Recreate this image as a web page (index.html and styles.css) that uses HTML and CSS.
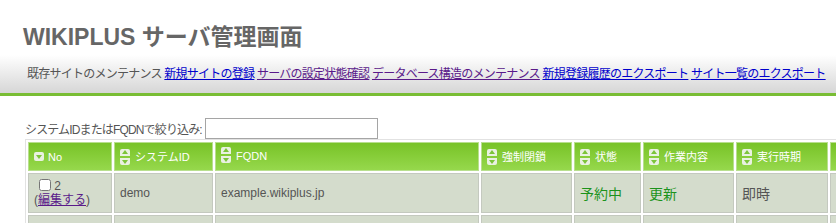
FILE: index.html
```html
<!DOCTYPE html>
<html lang="ja">
<head>
    <meta charset="UTF-8">
    <title>WIKIPLUS サーバ管理画面</title>
    <link rel="stylesheet" href="styles.css">
</head>
<body>

<div class="header">
    <h1>WIKIPLUS サーバ管理画面</h1>
</div>

<!-- Menu -->
<div class="nav">
    <span class="current">既存サイトのメンテナンス</span>
    <a href="#">新規サイトの登録</a>
    <a href="#" class="visited">サーバの設定状態確認</a>
    <a href="#" class="visited">データベース構造のメンテナンス</a>
    <a href="#">新規登録履歴のエクスポート</a>
    <a href="#">サイト一覧のエクスポート</a>
</div>

<div class="content">
    <div class="filter">
        <label for="filter-input">システムIDまたはFQDNで絞り込み:</label>
        <input type="text" id="filter-input">
    </div>

    <div class="table-wrap">
        <table class="sites">
            <thead>
                <tr>
                    <th class="col-no"><span class="sort sort-down"></span>No</th>
                    <th class="col-id"><span class="sort"></span>システムID</th>
                    <th class="col-fqdn"><span class="sort"></span>FQDN</th>
                    <th class="col-close"><span class="sort"></span>強制閉鎖</th>
                    <th class="col-state"><span class="sort"></span>状態</th>
                    <th class="col-work"><span class="sort"></span>作業内容</th>
                    <th class="col-when"><span class="sort"></span>実行時期</th>
                    <th class="col-more"></th>
                </tr>
            </thead>
            <tbody>
                <tr>
                    <td class="no">
                        <label class="check"><input type="checkbox"> 2</label>
                        (<a href="#">編集する</a>)
                    </td>
                    <td>demo</td>
                    <td>example.wikiplus.jp</td>
                    <td></td>
                    <td class="big green">予約中</td>
                    <td class="big green">更新</td>
                    <td class="big">即時</td>
                    <td></td>
                </tr>
                <tr class="next">
                    <td></td><td></td><td></td><td></td><td></td><td></td><td></td><td></td>
                </tr>
            </tbody>
        </table>
    </div>
</div>

</body>
</html>
```

FILE: styles.css
```css
body {
    margin: 0;
    padding: 0;
    background-color: #fff;
    font-family: "Liberation Sans", Arial, "Noto Sans CJK JP", sans-serif;
    color: #555;
    overflow: hidden;
}

.header {
    padding: 24px 0 0 23px;
    height: 31px;
}

h1 {
    margin: 0;
    font-size: 23px;
    line-height: 26px;
    font-weight: bold;
    color: #666;
}

.nav {
    height: 38px;
    line-height: 38px;
    padding-left: 27px;
    font-size: 12px;
    letter-spacing: -0.75px;
    white-space: nowrap;
    background: linear-gradient(#fff, #d6d6d6);
    border-bottom: 3px solid #79bd34;
}

.nav .current {
    color: #555;
}

.nav a {
    color: #0000cc;
}

.nav a.visited {
    color: #5a1a8a;
}

.content {
    padding-left: 25px;
}

.filter {
    margin-top: 21px;
    height: 22px;
    font-size: 12px;
    letter-spacing: -0.85px;
    display: flex;
    align-items: center;
}

.filter input {
    margin: 0 0 0 3px;
    width: 167px;
    height: 17px;
    border: 1px solid #a5a5a5;
    padding: 1px 2px;
}

.table-wrap {
    overflow: hidden;
}

.sites {
    border: 1px solid #e2e2e2;
    border-right: none;
    border-spacing: 2px;
    table-layout: fixed;
    width: 887px;
    font-size: 12px;
}

.sites th,
.sites td {
    box-sizing: border-box;
    text-align: left;
    padding: 0 5px;
    white-space: nowrap;
}

.sites th {
    height: 29px;
    color: #fff;
    font-weight: normal;
    font-size: 11px;
    background: linear-gradient(#78c327, #96d84c);
    border: 1px solid #b8df8e;
}

.sites td {
    height: 40px;
    background-color: #d4dccc;
    border: 1px solid #c4c9bf;
}

.sites .next td {
    height: 20px;
}

.col-no { width: 84px; }
.col-id { width: 99px; }
.col-fqdn { width: 264px; }
.col-close { width: 91px; }
.col-state { width: 67px; }
.col-work { width: 91px; }
.col-when { width: 92px; }
.col-more { width: 80px; }

.sort {
    display: inline-block;
    vertical-align: middle;
    width: 10px;
    height: 16px;
    margin: -3px 5px 0 0;
    background:
        linear-gradient(#e9f1e1, #e9f1e1) top / 10px 7px no-repeat,
        linear-gradient(#e9f1e1, #e9f1e1) bottom / 10px 7px no-repeat;
    border-radius: 2px;
    position: relative;
}

.sort::before,
.sort::after {
    content: "";
    position: absolute;
    left: 2px;
    border-left: 3px solid transparent;
    border-right: 3px solid transparent;
}

.sort::before {
    top: 1px;
    border-bottom: 4px solid #7cc43a;
}

.sort::after {
    bottom: 1px;
    border-top: 4px solid #7cc43a;
}

.sort.sort-down {
    height: 9px;
    background: #e9f1e1;
    margin-right: 4px;
}

.sort.sort-down::before {
    display: none;
}

.sort.sort-down::after {
    bottom: 2px;
}

.no {
    line-height: 14px;
}

.no .check {
    display: block;
    padding-left: 5px;
}

.no input {
    margin: 0;
    width: 12px;
    height: 12px;
    vertical-align: -1px;
}

.no a {
    color: #5a1a8a;
}

.big {
    font-size: 14px;
}

.green {
    color: #1b931b;
}
```
